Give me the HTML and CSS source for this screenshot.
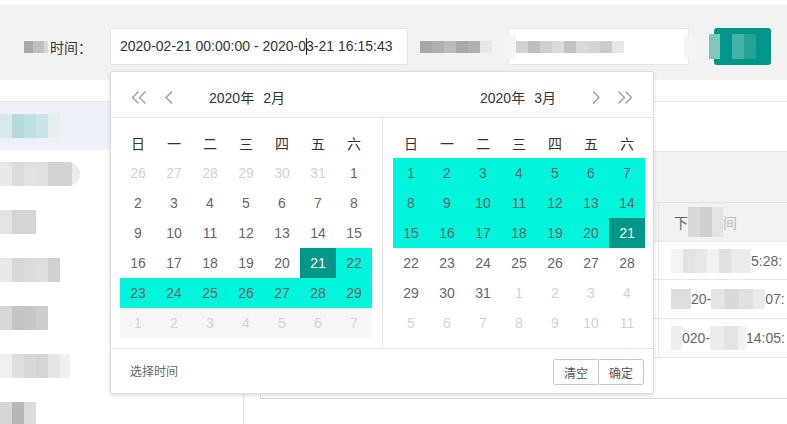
FILE: index.html
```html
<!DOCTYPE html>
<html lang="zh-CN">
<head>
<meta charset="utf-8">
<title>laydate</title>
<link rel="stylesheet" href="styles.css">
</head>
<body>
<div class="page">
  <header class="toolbar">
    <label class="field-label"><span class="blur blur-l1"></span>时间：</label>
    <div class="input input-range">2020-02-21 00:00:00 - 2020-0<span class="caret"></span>3-21 16:15:43</div>
    <span class="blur blur-l2"></span>
    <div class="input input-kw"><span class="blur blur-k0"></span><span class="blur blur-k1"></span><span class="blur blur-k2"></span></div>
    <button class="btn-search" type="button"><span class="blur blur-b"></span></button>
  </header>

  <div class="main">
    <aside class="sidebar">
      <div class="side-head"></div>
      <div class="side-item active"><span class="blur s1"></span></div>
      <div class="side-item"><span class="blur s2"></span></div>
      <div class="side-item"><span class="blur s3"></span></div>
      <div class="side-item"><span class="blur s4"></span></div>
      <div class="side-item"><span class="blur s5"></span></div>
      <div class="side-item"><span class="blur s6"></span></div>
      <div class="side-item"><span class="blur s7"></span></div>
    </aside>
    <section class="content">
      <div class="tabs"></div>
      <div class="panel">
        <div class="panel-top"></div>
        <div class="panel-bar"></div>
        <div class="tbl">
          <div class="tbl-row tbl-head"><div></div><div class="cell"><span>下</span><span class="blur th-b"></span><span class="faint">间</span></div></div>
          <div class="tbl-row r38"><div></div><div class="cell"><span class="blur c1a"></span><span>5:28:</span></div></div>
          <div class="tbl-row"><div></div><div class="cell"><span class="blur c2a"></span><span>20-</span><span class="blur c2b"></span><span>07:</span></div></div>
          <div class="tbl-row"><div></div><div class="cell"><span class="blur c3a"></span><span>020-</span><span class="blur c3b"></span><span>14:05:</span></div></div>
        </div>
      </div>
    </section>
  </div>

  <div class="laydate">
    <div class="ld-body">
      <div class="ld-main ld-left">
        <div class="ld-header">
          <div class="ld-nav">
            <svg class="ico" width="16" height="13" viewBox="0 0 16 13"><path d="M7.5 0.5 L1.5 6.5 L7.5 12.5 M14.5 0.5 L8.5 6.5 L14.5 12.5" fill="none" stroke="#9a9a9a" stroke-width="1.3"/></svg>
            <svg class="ico ico-gap" width="8" height="13" viewBox="0 0 8 13"><path d="M7 0.5 L1 6.5 L7 12.5" fill="none" stroke="#9a9a9a" stroke-width="1.3"/></svg>
          </div>
          <div class="ld-title"><span>2020年</span><span>2月</span></div>
          <div></div>
        </div>
        <div class="ld-content">
          <div class="ld-grid">
            <span class="wk">日</span><span class="wk">一</span><span class="wk">二</span><span class="wk">三</span><span class="wk">四</span><span class="wk">五</span><span class="wk">六</span>
            <span class="o">26</span><span class="o">27</span><span class="o">28</span><span class="o">29</span><span class="o">30</span><span class="o">31</span><span>1</span>
            <span>2</span><span>3</span><span>4</span><span>5</span><span>6</span><span>7</span><span>8</span>
            <span>9</span><span>10</span><span>11</span><span>12</span><span>13</span><span>14</span><span>15</span>
            <span>16</span><span>17</span><span>18</span><span>19</span><span>20</span><span class="s">21</span><span class="r">22</span>
            <span class="r">23</span><span class="r">24</span><span class="r">25</span><span class="r">26</span><span class="r">27</span><span class="r">28</span><span class="r">29</span>
            <span class="o gb">1</span><span class="o gb">2</span><span class="o gb">3</span><span class="o gb">4</span><span class="o gb">5</span><span class="o gb">6</span><span class="o gb">7</span>
          </div>
        </div>
      </div>
      <div class="ld-main ld-right">
        <div class="ld-header">
          <div></div>
          <div class="ld-title"><span>2020年</span><span>3月</span></div>
          <div class="ld-nav ld-nav-r">
            <svg class="ico" width="8" height="13" viewBox="0 0 8 13"><path d="M1 0.5 L7 6.5 L1 12.5" fill="none" stroke="#9a9a9a" stroke-width="1.3"/></svg>
            <svg class="ico ico-gap2" width="16" height="13" viewBox="0 0 16 13"><path d="M1.5 0.5 L7.5 6.5 L1.5 12.5 M8.5 0.5 L14.5 6.5 L8.5 12.5" fill="none" stroke="#9a9a9a" stroke-width="1.3"/></svg>
          </div>
        </div>
        <div class="ld-content">
          <div class="ld-grid">
            <span class="wk">日</span><span class="wk">一</span><span class="wk">二</span><span class="wk">三</span><span class="wk">四</span><span class="wk">五</span><span class="wk">六</span>
            <span class="r">1</span><span class="r">2</span><span class="r">3</span><span class="r">4</span><span class="r">5</span><span class="r">6</span><span class="r">7</span>
            <span class="r">8</span><span class="r">9</span><span class="r">10</span><span class="r">11</span><span class="r">12</span><span class="r">13</span><span class="r">14</span>
            <span class="r">15</span><span class="r">16</span><span class="r">17</span><span class="r">18</span><span class="r">19</span><span class="r">20</span><span class="s">21</span>
            <span>22</span><span>23</span><span>24</span><span>25</span><span>26</span><span>27</span><span>28</span>
            <span>29</span><span>30</span><span>31</span><span class="o">1</span><span class="o">2</span><span class="o">3</span><span class="o">4</span>
            <span class="o">5</span><span class="o">6</span><span class="o">7</span><span class="o">8</span><span class="o">9</span><span class="o">10</span><span class="o">11</span>
          </div>
        </div>
      </div>
    </div>
    <div class="ld-footer">
      <span class="ld-time">选择时间</span>
      <div class="ld-btns"><span class="ld-btn">清空</span><span class="ld-btn">确定</span></div>
    </div>
  </div>
</div>
</body>
</html>
```

FILE: styles.css
```css
* { box-sizing: border-box; }
html, body { margin: 0; padding: 0; }
body {
  width: 787px;
  height: 424px;
  overflow: hidden;
  background: #fff;
  font-family: "Liberation Sans", Arial, "Noto Sans CJK SC", sans-serif;
  font-size: 14px;
  color: #666;
}
.page { position: relative; width: 787px; height: 424px; overflow: hidden; }

/* toolbar */
.toolbar {
  margin-top: 5px;
  height: 75px;
  background: #f2f2f2;
  display: flex;
  align-items: flex-start;
  padding: 23px 0 0 24px;
}
.field-label { width: 86px; height: 37px; display: flex; align-items: center; color: #333; }
.blur { display: inline-block; flex: none; }
.blur-l1 { width: 24px; height: 12px; margin-right: 2px; background: linear-gradient(90deg, #a9a9a9 0 9px, #c0c0c0 9px 20px, #d8d8d8 20px 24px); }
.input { height: 37px; border: 1px solid #e6e6e6; background: #fff; border-radius: 2px; }
.input-range { width: 298px; padding-left: 9px; line-height: 35px; color: #333; white-space: nowrap; }
.caret { display: inline-block; width: 1px; height: 17px; background: #222; vertical-align: -4px; margin-right: -1px; }
.blur-l2 {
  width: 72px; height: 12px; margin: 13px 0 0 12px;
  background: linear-gradient(90deg, #a8a8a8 0 12px, #b0b0b0 12px 24px, #bcbcbc 24px 36px, #a9a9a9 36px 48px, #b2b2b2 48px 60px, #e8e8e8 60px 72px);
}
.input-kw { width: 181px; margin-left: 16px; display: flex; align-items: center; }
.blur-k0 { width: 12px; height: 24px; margin-left: -5px; background: #f5f5f5; }
.blur-k1 {
  width: 108px; height: 12px;
  background: linear-gradient(90deg, #d2d2d2 0 12px, #bfbfbf 12px 24px, #d0d0d0 24px 36px, #dcdcdc 36px 48px, #c2c2c2 48px 60px, #d9d9d9 60px 72px, #d4d4d4 72px 84px, #cbcbcb 84px 96px, #e8e8e8 96px 108px);
}
.blur-k2 { width: 12px; height: 24px; margin-left: auto; margin-right: -8px; background: #f5f5f5; }
.btn-search {
  position: relative;
  width: 57px; height: 37px; margin-left: 25px;
  border: 0; border-radius: 3px; padding: 0;
  background: #009688;
  display: flex; align-items: center;
}
.btn-search::before { content: ""; position: absolute; left: -5px; top: 6px; width: 11px; height: 25px; background: #7fc7bd; }
.blur-b { width: 24px; height: 25px; margin-left: 18px; background: linear-gradient(90deg, #47b0a6 0 12px, #28a296 12px 24px); }

/* main area */
.main { display: flex; height: 344px; }
.sidebar { width: 244px; flex: none; border-right: 1px solid #e2e2e2; }
.side-head { height: 22px; border-bottom: 1px solid #e6e6e6; }
.side-item { height: 48px; display: flex; align-items: center; }
.side-item.active { background: #eef1f8; }
.side-item .blur { height: 24px; }
.s1 { width: 60px; background: linear-gradient(90deg, #d6eaec 0 12px, #b2dcda 12px 24px, #bde0e0 24px 36px, #c8e4e6 36px 48px, #e6eef2 48px 60px); }
.s2 { width: 80px; border-radius: 0 12px 12px 0; background: linear-gradient(90deg, #e8e8e8 0 12px, #dcdcdc 12px 24px, #e2e2e2 24px 36px, #e0e0e0 36px 48px, #d2d2d2 48px 72px, #ececec 72px 80px); }
.s3 { width: 36px; background: linear-gradient(90deg, #e4e4e4 0 12px, #d4d4d4 12px 36px); }
.s4 { width: 60px; background: linear-gradient(90deg, #e8e8e8 0 12px, #d8d8d8 12px 24px, #dcdcdc 24px 36px, #dedede 36px 48px, #d0d0d0 48px 60px); }
.s5 { width: 48px; background: linear-gradient(90deg, #d8d8d8 0 12px, #c4c4c4 12px 24px, #c6c6c6 24px 36px, #cdcdcd 36px 48px); }
.s6 { width: 70px; background: linear-gradient(90deg, #f0f0f0 0 12px, #dedede 12px 24px, #d8d8d8 24px 36px, #d4d4d4 36px 48px, #e6e6e6 48px 60px, #f0f0f0 60px 70px); }
.s7 { width: 36px; background: linear-gradient(90deg, #d6d6d6 0 12px, #b8b8b8 12px 24px, #dcdcdc 24px 36px); }

.content { flex: 1; min-width: 0; }
.tabs { height: 22px; border-bottom: 1px solid #e6e6e6; }
.panel { margin-left: 16px; height: 297px; border-left: 1px solid #e6e6e6; border-bottom: 1px solid #dcdcdc; }
.panel-top { height: 49px; }
.panel-bar { height: 51px; background: #f2f2f2; border-top: 1px solid #e6e6e6; }
.tbl-row { display: grid; grid-template-columns: 398px 1fr; height: 39px; border-bottom: 1px solid #e6e6e6; }
.tbl-row.r38 { height: 38px; }
.tbl-row > div:first-child { border-right: 1px solid #e6e6e6; }
.tbl-head { height: 40px; background: #f2f2f2; border-top: 1px solid #e2e2e2; }
.cell { display: flex; align-items: center; padding-left: 12px; white-space: nowrap; overflow: hidden; color: #666; }
.tbl-head .cell { padding-left: 15px; }
.faint { color: #bbb; }
.th-b { width: 35px; height: 30px; background: linear-gradient(90deg, #d8d8d8 0 12px, #cfcfcf 12px 24px, #e4e4e4 24px 35px); }
.c1a { width: 80px; height: 24px; background: linear-gradient(90deg, #f4f4f4 0 12px, #e2e2e2 12px 24px, #e8e8e8 24px 36px, #f2f2f2 36px 48px, #e0e0e0 48px 60px, #ececec 60px 80px); }
.c2a { width: 20px; height: 20px; background: #dedede; }
.c2b { width: 54px; height: 20px; background: linear-gradient(90deg, #e4e4e4 0 14px, #d8d8d8 14px 28px, #e0e0e0 28px 42px, #eaeaea 42px 54px); }
.c3a { width: 11px; height: 24px; background: #eeeeee; }
.c3b { width: 36px; height: 24px; background: linear-gradient(90deg, #ececec 0 14px, #e4e4e4 14px 28px, #f2f2f2 28px 36px); }

/* date picker */
.laydate {
  position: absolute;
  left: 110px;
  top: 71px;
  width: 544px;
  background: #fff;
  border: 1px solid #dcdcdc;
  border-radius: 2px;
  box-shadow: 0 2px 4px rgba(0, 0, 0, 0.12);
}
.ld-body { display: flex; }
.ld-left { width: 272px; }
.ld-right { width: 270px; }
.ld-header {
  height: 46px;
  padding-top: 5px;
  border-bottom: 1px solid #e6e6e6;
  display: grid;
  grid-template-columns: 1fr auto 1fr;
  align-items: center;
  color: #333;
}
.ld-nav { display: flex; align-items: center; padding-left: 20px; }
.ld-nav-r { justify-content: flex-end; padding: 0 20px 0 0; }
.ico { display: block; }
.ico-gap { margin-left: 18px; }
.ico-gap2 { margin-left: 17px; }
.ld-title span + span { margin-left: 9px; }
.ld-content { padding: 10px 0 10px 9px; }
.ld-left .ld-content { border-right: 1px solid #e6e6e6; }
.ld-right .ld-content { padding-left: 10px; }
.ld-grid { display: grid; grid-template-columns: repeat(7, 36px); grid-auto-rows: 30px; }
.ld-grid span { display: flex; align-items: center; justify-content: center; color: #666; }
.ld-grid .wk { color: #333; }
.ld-grid .o { color: #d2d2d2; }
.ld-grid .r { background: #00f5dc; }
.ld-grid .s { background: #009688; color: #fff; }
.ld-grid .gb { background: #f6f6f6; }
.ld-footer {
  height: 45px;
  border-top: 1px solid #e6e6e6;
  display: flex;
  justify-content: space-between;
  align-items: flex-start;
  padding: 10px 9px 0 19px;
  font-size: 12px;
}
.ld-time { line-height: 26px; color: #666; }
.ld-btns { display: flex; }
.ld-btn {
  width: 46px;
  height: 26px;
  border: 1px solid #c9c9c9;
  border-radius: 2px;
  display: flex;
  align-items: center;
  justify-content: center;
  color: #555;
}
.ld-btn + .ld-btn { margin-left: -1px; }
```
